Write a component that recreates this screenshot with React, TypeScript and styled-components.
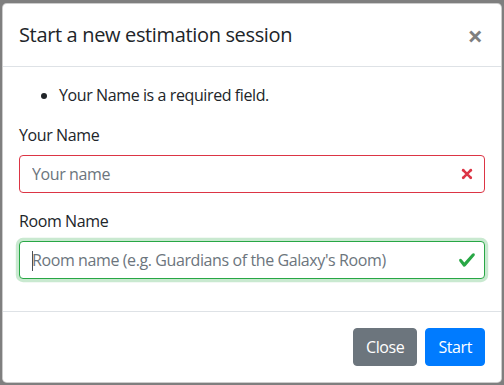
import styled, { createGlobalStyle } from "styled-components";

const GlobalStyle = createGlobalStyle`
  html, body {
    margin: 0;
    background: #7f7f7f;
  }
  body {
    font-family: "Open Sans", "Noto Sans", sans-serif;
    font-size: 16px;
    line-height: 1.5;
    letter-spacing: -0.4px;
    color: #212529;
  }
  * {
    box-sizing: border-box;
  }
`;

const Backdrop = styled.div`
  min-height: 385px;
  padding: 3px 2px 0;
`;

const Dialog = styled.div`
  max-width: 500px;
  margin: 0 auto;
  background: #fff;
  border: 1px solid rgba(0, 0, 0, 0.2);
  border-radius: 0.3rem;
  display: flex;
  flex-direction: column;
`;

const Header = styled.div`
  display: flex;
  align-items: flex-start;
  justify-content: space-between;
  padding: 1rem;
  border-bottom: 1px solid #dee2e6;
`;

const Title = styled.h5`
  margin: 0;
  font-size: 1.25rem;
  font-weight: 500;
  line-height: 1.5;
  letter-spacing: -0.35px;
`;

const CloseX = styled.button`
  padding: 18px 18px 14px 16px;
  margin: -1rem -1rem -1rem auto;
  background: transparent;
  border: 0;
  font-family: inherit;
  font-size: 27px;
  font-weight: 700;
  line-height: 1;
  color: #000;
  opacity: 0.5;
  cursor: pointer;
`;

const Body = styled.div`
  padding: 1rem;
`;

const Errors = styled.ul`
  margin: 0 0 1rem;
  padding-left: 40px;
`;

const FormGroup = styled.div`
  margin-bottom: 1rem;
`;

const Label = styled.label`
  display: inline-block;
  margin-bottom: 0.5rem;
`;

const InputWrap = styled.div`
  position: relative;
`;

const Input = styled.input<{ $state: "valid" | "invalid" }>`
  display: block;
  width: 100%;
  height: 38px;
  padding: 0.375rem 33px 0.375rem 0.75rem;
  font-family: inherit;
  font-size: 1rem;
  line-height: 1.5;
  letter-spacing: -0.4px;
  color: #495057;
  background: #fff;
  border: 1px solid
    ${({ $state }) => ($state === "valid" ? "#28a745" : "#dc3545")};
  border-radius: 0.25rem;
  outline: none;
  box-shadow: ${({ $state }) =>
    $state === "valid" ? "0 0 0 0.2rem rgba(40, 167, 69, 0.25)" : "none"};

  &::placeholder {
    color: #6c757d;
    opacity: 1;
  }
`;

const StateIcon = styled.svg`
  position: absolute;
  right: 9px;
  top: 10px;
  width: 18px;
  height: 18px;
  pointer-events: none;
`;

const Caret = styled.span`
  position: absolute;
  left: 13px;
  top: 10px;
  width: 1px;
  height: 20px;
  background: #495057;
  pointer-events: none;
`;

const Footer = styled.div`
  display: flex;
  align-items: center;
  justify-content: flex-end;
  padding: 0.75rem;
  border-top: 1px solid #dee2e6;
`;

const Button = styled.button<{ $variant: "secondary" | "primary" }>`
  margin: 0.25rem;
  padding: 0.375rem 0.75rem;
  font-family: inherit;
  font-size: 1rem;
  line-height: 1.5;
  letter-spacing: -0.4px;
  color: #fff;
  border: 1px solid
    ${({ $variant }) => ($variant === "primary" ? "#007bff" : "#6c757d")};
  background: ${({ $variant }) =>
    $variant === "primary" ? "#007bff" : "#6c757d"};
  border-radius: 0.25rem;
  cursor: pointer;
`;

const InvalidIcon = () => (
  <StateIcon viewBox="-2 -2 7 7" fill="#dc3545">
    <path stroke="#dc3545" d="M0 0l3 3m0-3L0 3" />
    <circle r=".5" />
    <circle cx="3" r=".5" />
    <circle cy="3" r=".5" />
    <circle cx="3" cy="3" r=".5" />
  </StateIcon>
);

const ValidIcon = () => (
  <StateIcon viewBox="0 0 8 8">
    <path
      fill="#28a745"
      d="M2.3 6.73L.6 4.53c-.4-1.04.46-1.4 1.1-.8l1.1 1.4 3.4-3.8c.6-.63 1.6-.27 1.2.7l-4 4.6c-.43.5-.8.4-1.1.1z"
    />
  </StateIcon>
);

export default function App() {
  return (
    <>
      <GlobalStyle />
      <Backdrop>
        <Dialog>
          <Header>
            <Title>Start a new estimation session</Title>
            <CloseX aria-label="Close">×</CloseX>
          </Header>
          <Body>
            <Errors>
              <li>Your Name is a required field.</li>
            </Errors>
            <FormGroup>
              <Label>Your Name</Label>
              <InputWrap>
                <Input $state="invalid" placeholder="Your name" />
                <InvalidIcon />
              </InputWrap>
            </FormGroup>
            <FormGroup>
              <Label>Room Name</Label>
              <InputWrap>
                <Input
                  $state="valid"
                  placeholder="Room name (e.g. Guardians of the Galaxy's Room)"
                />
                <Caret />
                <ValidIcon />
              </InputWrap>
            </FormGroup>
          </Body>
          <Footer>
            <Button $variant="secondary">Close</Button>
            <Button $variant="primary">Start</Button>
          </Footer>
        </Dialog>
      </Backdrop>
    </>
  );
}
